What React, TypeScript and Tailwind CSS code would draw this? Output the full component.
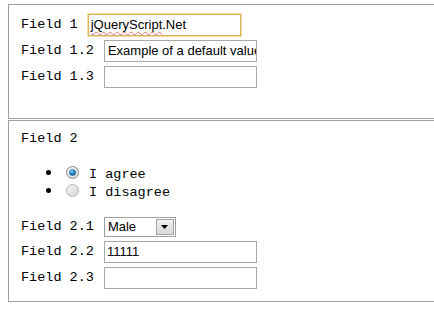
import React from "react";

const mono = { fontFamily: '"Liberation Mono", "DejaVu Sans Mono", monospace' };
const sans = { fontFamily: '"Liberation Sans", Arial, sans-serif' };

function Label({ children }: { children: React.ReactNode }) {
  return (
    <span className="text-[13.5px] leading-[18px] text-black whitespace-pre" style={mono}>
      {children}
    </span>
  );
}

function TextBox({ children, focused }: { children?: React.ReactNode; focused?: boolean }) {
  return (
    <div
      className={
        "h-[22px] w-[153px] flex items-center overflow-hidden whitespace-nowrap text-[13px] text-black bg-white " +
        (focused
          ? "border border-[#d9b25a] shadow-[0_0_0_1px_#f3dea6] pl-[2px]"
          : "border border-[#a9a9a9] pl-[3px]")
      }
      style={sans}
    >
      {children}
    </div>
  );
}

function Radio({ checked }: { checked?: boolean }) {
  return (
    <svg width="13" height="13" viewBox="0 0 13 13">
      <defs>
        <linearGradient id={checked ? "rgc" : "rgu"} x1="0" y1="0" x2="1" y2="1">
          <stop offset="0" stopColor="#f4f4f4" />
          <stop offset="1" stopColor="#d6d6d6" />
        </linearGradient>
        <radialGradient id="dot" cx="0.4" cy="0.35" r="0.7">
          <stop offset="0" stopColor="#7fd0ff" />
          <stop offset="0.5" stopColor="#2a86c8" />
          <stop offset="1" stopColor="#0c4f86" />
        </radialGradient>
      </defs>
      <circle cx="6.5" cy="6.5" r="6" fill={`url(#${checked ? "rgc" : "rgu"})`} stroke={checked ? "#8a8a8a" : "#b4b4b4"} strokeWidth="1" />
      {checked && <circle cx="6.5" cy="6.5" r="3.3" fill="url(#dot)" />}
    </svg>
  );
}

function Row({ label, children }: { label: string; children: React.ReactNode }) {
  return (
    <div className="flex items-center gap-[10px]">
      <Label>{label}</Label>
      {children}
    </div>
  );
}

export default function App() {
  return (
    <div className="w-[434px] h-[309px] overflow-hidden bg-white pt-[4px] pl-[8px]">
      <div className="w-[470px] h-[115px] border-t border-l border-b border-[#a0a0a0] pt-[9px] pl-[12px] flex flex-col gap-[4px]">
        <Row label="Field 1">
          <TextBox focused>
            <span className="underline decoration-wavy decoration-[#e07070] decoration-1 underline-offset-[2px]">jQueryScript</span>
            <span>.Net</span>
          </TextBox>
        </Row>
        <Row label="Field 1.2">
          <TextBox>Example of a default value</TextBox>
        </Row>
        <Row label="Field 1.3">
          <TextBox />
        </Row>
      </div>

      <div className="mt-[1px] w-[470px] h-[182px] border-t border-l border-b border-[#a0a0a0] pt-[9px] pl-[12px] flex flex-col">
        <div className="h-[18px] flex items-center">
          <Label>Field 2</Label>
        </div>

        <div className="mt-[15px] flex flex-col">
          <div className="h-[18px] flex items-center">
            <span className="ml-[25px] w-[5px] h-[5px] rounded-full bg-black" />
            <span className="ml-[15px] flex"><Radio checked /></span>
            <span className="ml-[10px]"><Label>I agree</Label></span>
          </div>
          <div className="h-[18px] flex items-center">
            <span className="ml-[25px] w-[5px] h-[5px] rounded-full bg-black" />
            <span className="ml-[15px] flex"><Radio /></span>
            <span className="ml-[10px]"><Label>I disagree</Label></span>
          </div>
        </div>

        <div className="mt-[18px] flex flex-col gap-[4px]">
          <Row label="Field 2.1">
            <div className="h-[20px] w-[72px] border border-[#a0a0a0] flex items-center justify-between bg-white" style={sans}>
              <span className="pl-[3px] text-[13px] text-black">Male</span>
              <span className="mr-[1px] w-[18px] h-[16px] border border-[#a5a5a5] bg-gradient-to-b from-[#f0f0f0] to-[#d8d8d8] flex items-center justify-center">
                <svg width="7" height="4" viewBox="0 0 7 4"><path d="M0 0h7L3.5 4z" fill="#000" /></svg>
              </span>
            </div>
          </Row>
          <Row label="Field 2.2">
            <TextBox><span className="-ml-[1px]">11111</span></TextBox>
          </Row>
          <Row label="Field 2.3">
            <TextBox />
          </Row>
        </div>
      </div>
    </div>
  );
}
